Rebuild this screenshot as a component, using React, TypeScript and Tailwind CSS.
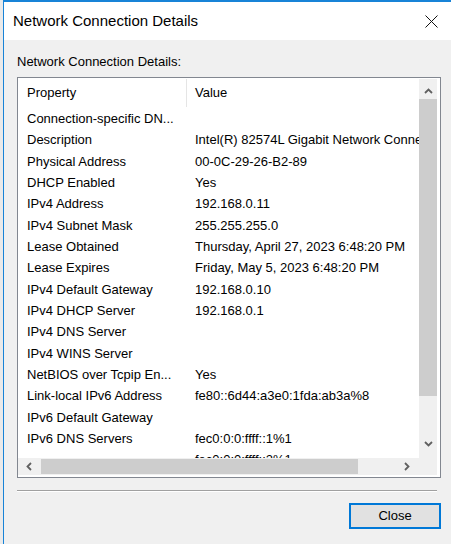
const rows: [string, string][] = [
  ["Connection-specific DN...", ""],
  ["Description", "Intel(R) 82574L Gigabit Network Connection"],
  ["Physical Address", "00-0C-29-26-B2-89"],
  ["DHCP Enabled", "Yes"],
  ["IPv4 Address", "192.168.0.11"],
  ["IPv4 Subnet Mask", "255.255.255.0"],
  ["Lease Obtained", "Thursday, April 27, 2023 6:48:20 PM"],
  ["Lease Expires", "Friday, May 5, 2023 6:48:20 PM"],
  ["IPv4 Default Gateway", "192.168.0.10"],
  ["IPv4 DHCP Server", "192.168.0.1"],
  ["IPv4 DNS Server", ""],
  ["IPv4 WINS Server", ""],
  ["NetBIOS over Tcpip En...", "Yes"],
  ["Link-local IPv6 Address", "fe80::6d44:a3e0:1fda:ab3a%8"],
  ["IPv6 Default Gateway", ""],
  ["IPv6 DNS Servers", "fec0:0:0:ffff::1%1"],
  ["", "fec0:0:0:ffff::2%1"],
]

const Chevron = ({ dir }: { dir: "up" | "down" | "left" | "right" }) => {
  const horiz = dir === "left" || dir === "right"
  const d =
    dir === "up" ? "M1 5 L4.5 1.5 L8 5" :
    dir === "down" ? "M1 1 L4.5 4.5 L8 1" :
    dir === "left" ? "M5 1 L1.5 4.5 L5 8" :
    "M1 1 L4.5 4.5 L1 8"
  return (
    <svg width={horiz ? 6 : 9} height={horiz ? 9 : 6} viewBox={horiz ? "0 0 6 9" : "0 0 9 6"}>
      <path d={d} fill="none" stroke="#606060" strokeWidth="1.8" />
    </svg>
  )
}

const App = () => {
  return (
    <div className="w-[451px] h-[544px] flex bg-[#ececec] overflow-hidden font-['Liberation_Sans',Arial,sans-serif] text-black">
      <div className="w-[3px] shrink-0 h-full bg-[#eaeaea]" />
      <div className="flex-1 min-w-0 flex flex-col border-l border-t-2 border-[#1883d7] bg-[#f0f0f0]">
        {/* title bar */}
        <div className="h-[38px] bg-white flex items-center justify-between pl-[9px] pr-[13px]">
          <span className="text-[15px]">Network Connection Details</span>
          <svg width="13" height="13" viewBox="0 0 13 13">
            <path d="M0.5 0.5 L12.5 12.5 M12.5 0.5 L0.5 12.5" stroke="#111" strokeWidth="1" />
          </svg>
        </div>

        <div className="flex flex-col pl-[13px] pr-[10px]">
          <div className="mt-[14px] h-[16px] leading-[16px] text-[13px]">Network Connection Details:</div>

          {/* list view */}
          <div className="mt-[7px] w-[424px] h-[401px] border border-[#828790] bg-white pr-[3px] pt-[1px] pb-[2px] flex flex-col">
            <div className="flex h-[379px]">
              <div className="flex-1 min-w-0 overflow-hidden text-[13px]">
                <div className="flex h-[28px] items-center">
                  <div className="w-[168px] shrink-0 pl-[9px]">Property</div>
                  <div className="w-px shrink-0 h-full bg-[#e5e5e5]" />
                  <div className="pl-[8px]">Value</div>
                </div>
                <div className="h-px" />
                {rows.map(([k, v], i) => (
                  <div key={i} className="flex h-[21.33px] items-center whitespace-nowrap">
                    <div className="w-[169px] shrink-0 pl-[9px] overflow-hidden">{k}</div>
                    <div className="pl-[8px]">{v}</div>
                  </div>
                ))}
              </div>
              {/* vertical scrollbar */}
              <div className="w-[18px] shrink-0 bg-[#f0f0f0] flex flex-col">
                <div className="h-[20px] flex justify-center pt-[9px]">
                  <Chevron dir="up" />
                </div>
                <div className="h-[297px] bg-[#cdcdcd]" />
                <div className="flex-1" />
                <div className="h-[22px] flex justify-center pt-[5px]">
                  <Chevron dir="down" />
                </div>
              </div>
            </div>
            {/* horizontal scrollbar */}
            <div className="flex h-[17px]">
              <div className="flex-1 min-w-0 bg-[#f0f0f0] flex">
                <div className="w-[23px] shrink-0 flex items-center pl-[8px]">
                  <Chevron dir="left" />
                </div>
                <div className="w-[317px] shrink-0 mt-[1px] h-[15px] bg-[#cdcdcd]" />
                <div className="flex-1 flex items-center justify-end pr-[9px]">
                  <Chevron dir="right" />
                </div>
              </div>
              <div className="w-[18px] shrink-0 bg-[#f0f0f0]" />
            </div>
          </div>

          {/* separator */}
          <div className="mt-[12px] w-[420px] h-px bg-[#a0a0a0]" />
          <div className="w-[420px] h-px bg-white" />

          <div className="flex justify-end mt-[11px] w-[424px]">
            <button className="w-[92px] h-[26px] border-2 border-[#0078d7] bg-[#e1e1e1] text-[13px] flex items-center justify-center">
              Close
            </button>
          </div>
        </div>
      </div>
    </div>
  )
}

export default App
